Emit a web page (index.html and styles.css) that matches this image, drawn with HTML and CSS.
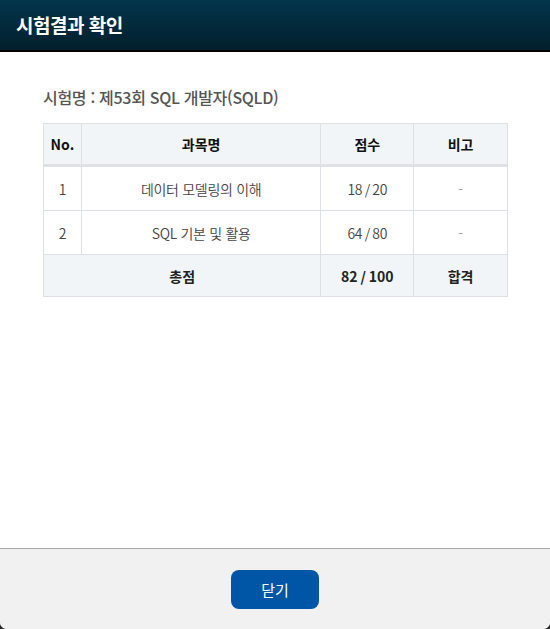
FILE: index.html
```html
<!DOCTYPE html>
<html lang="ko">
<head>
<meta charset="utf-8">
<title>시험결과 확인</title>
<link rel="stylesheet" href="styles.css">
</head>
<body>
<div class="modal">
  <header class="modal-head">
    <h1 class="modal-title">시험결과 확인</h1>
  </header>
  <main class="modal-body">
    <p class="exam-name">시험명 : 제53회 SQL 개발자(SQLD)</p>
    <table class="result">
      <colgroup>
        <col class="c-no"><col class="c-subj"><col class="c-score"><col class="c-note">
      </colgroup>
      <thead>
        <tr><th>No.</th><th>과목명</th><th>점수</th><th>비고</th></tr>
      </thead>
      <tbody>
        <tr><td>1</td><td>데이터 모델링의 이해</td><td>18&#8201;/&#8201;20</td><td class="dash">-</td></tr>
        <tr><td>2</td><td>SQL 기본 및 활용</td><td>64&#8201;/&#8201;80</td><td class="dash">-</td></tr>
      </tbody>
      <tfoot>
        <tr><th colspan="2">총점</th><th>82&#8201;/&#8201;100</th><th>합격</th></tr>
      </tfoot>
    </table>
  </main>
  <footer class="modal-foot">
    <button class="btn-close" type="button">닫기</button>
  </footer>
</div>
</body>
</html>
```
FILE: styles.css
```css
html, body {
  margin: 0;
  padding: 0;
  background: #2a2a2a;
}
body {
  font-family: "Noto Sans CJK KR", "Noto Sans", sans-serif;
}
.modal {
  width: 550px;
  height: 629px;
  display: flex;
  flex-direction: column;
  background: #fff;
  border-radius: 0 0 7px 7px;
  overflow: hidden;
}
.modal-head {
  height: 50px;
  flex: none;
  background: linear-gradient(#03354b, #021f2c);
  border-bottom: 2px solid #000;
  display: flex;
  align-items: center;
  padding: 0 16px;
}
.modal-title {
  margin: 0;
  color: #fff;
  font-size: 19px;
  font-weight: 700;
  letter-spacing: -0.5px;
  position: relative;
  top: -1px;
}
.modal-body {
  flex: 1;
  padding: 33px 42px 0 43px;
}
.exam-name {
  margin: 0 0 14px;
  font-size: 16px;
  line-height: 24px;
  color: #555;
  font-weight: 500;
  letter-spacing: -0.3px;
}
.result {
  width: 465px;
  border-collapse: collapse;
  font-size: 14px;
  text-align: center;
}
.c-no { width: 38px; }
.c-subj { width: 240px; }
.c-score { width: 93px; }
.c-note { width: 94px; }
.result th, .result td {
  border: 1px solid #dde1e5;
  padding: 0;
}
.result thead th {
  height: 40px;
  background: #f1f5f7;
  color: #111;
  font-weight: 700;
  border-bottom: 3px solid #dde1e5;
}
.result tbody td {
  height: 43px;
  color: #444;
  font-weight: 350;
  letter-spacing: -0.3px;
}
.result td.dash {
  color: #999;
}
.result tfoot th {
  height: 41px;
  background: #f1f5f7;
  color: #222;
  font-weight: 700;
}
.modal-foot {
  height: 80px;
  flex: none;
  background: #f1f1f1;
  border-top: 1px solid #a8a8a8;
  display: flex;
  justify-content: center;
  align-items: center;
}
.btn-close {
  width: 88px;
  height: 39px;
  border: 0;
  border-radius: 8px;
  background: #0056a6;
  color: #fff;
  font-family: inherit;
  font-size: 15px;
  font-weight: 400;
}
```
